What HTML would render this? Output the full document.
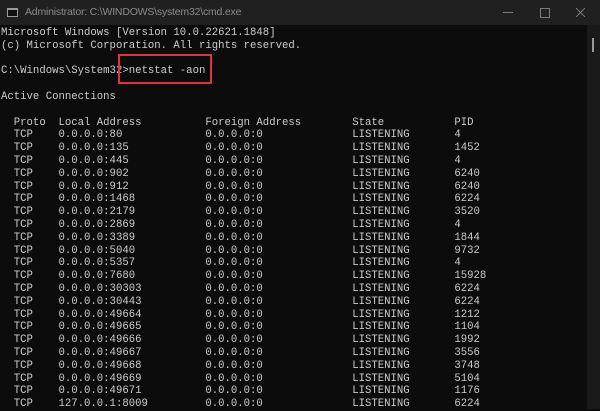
<!DOCTYPE html>
<html><head><meta charset="utf-8"><style>
html,body{margin:0;padding:0;background:#0c0c0c;}
body{width:600px;height:409px;overflow:hidden;position:relative;font-family:"Liberation Mono",monospace;}
#title{position:absolute;left:0;top:0;width:600px;height:25px;background:#202020;}
#title .t{position:absolute;left:25px;top:6px;font-family:"Liberation Sans",sans-serif;font-size:10.5px;color:#8a8a8a;letter-spacing:-0.2px;}
#icon{position:absolute;left:7px;top:8px;width:11px;height:9px;border:1px solid #9a9a9a;background:#111;box-sizing:border-box;}
#icon:before{content:"";position:absolute;left:0;top:0;width:9px;height:1px;background:#9a9a9a;}
#right{position:absolute;left:587px;top:25px;width:13px;height:384px;background:#1a1a1a;}
#thumb{position:absolute;left:592px;top:38px;width:2px;height:14px;background:#9a9a9a;}
pre{position:absolute;left:1px;top:27px;margin:0;font-family:"Liberation Mono",monospace;font-size:10.65px;line-height:12.8px;color:#cccccc;}
#box{position:absolute;left:118px;top:54px;width:94px;height:30px;border:2px solid #d9363e;box-sizing:border-box;}
.ctl{position:absolute;top:0;height:25px;}
</style></head><body>
<div id="title"><div id="icon"></div><div class="t">Administrator: C:\WINDOWS\system32\cmd.exe</div>
<div class="ctl" style="left:503px;width:10px;"><div style="position:absolute;top:12px;width:10px;height:1px;background:#7a7a7a"></div></div>
<div style="position:absolute;left:540px;top:8px;width:8px;height:8px;border:1px solid #7a7a7a;"></div>
<svg style="position:absolute;left:576px;top:8px" width="9" height="9"><path d="M0 0L9 9M9 0L0 9" stroke="#7a7a7a" stroke-width="1"/></svg>
</div>
<div id="right"></div><div id="thumb"></div>
<pre>Microsoft Windows [Version 10.0.22621.1848]
(c) Microsoft Corporation. All rights reserved.

C:\Windows\System32>netstat -aon

Active Connections

  Proto  Local Address          Foreign Address        State           PID
  TCP    0.0.0.0:80             0.0.0.0:0              LISTENING       4
  TCP    0.0.0.0:135            0.0.0.0:0              LISTENING       1452
  TCP    0.0.0.0:445            0.0.0.0:0              LISTENING       4
  TCP    0.0.0.0:902            0.0.0.0:0              LISTENING       6240
  TCP    0.0.0.0:912            0.0.0.0:0              LISTENING       6240
  TCP    0.0.0.0:1468           0.0.0.0:0              LISTENING       6224
  TCP    0.0.0.0:2179           0.0.0.0:0              LISTENING       3520
  TCP    0.0.0.0:2869           0.0.0.0:0              LISTENING       4
  TCP    0.0.0.0:3389           0.0.0.0:0              LISTENING       1844
  TCP    0.0.0.0:5040           0.0.0.0:0              LISTENING       9732
  TCP    0.0.0.0:5357           0.0.0.0:0              LISTENING       4
  TCP    0.0.0.0:7680           0.0.0.0:0              LISTENING       15928
  TCP    0.0.0.0:30303          0.0.0.0:0              LISTENING       6224
  TCP    0.0.0.0:30443          0.0.0.0:0              LISTENING       6224
  TCP    0.0.0.0:49664          0.0.0.0:0              LISTENING       1212
  TCP    0.0.0.0:49665          0.0.0.0:0              LISTENING       1104
  TCP    0.0.0.0:49666          0.0.0.0:0              LISTENING       1992
  TCP    0.0.0.0:49667          0.0.0.0:0              LISTENING       3556
  TCP    0.0.0.0:49668          0.0.0.0:0              LISTENING       3748
  TCP    0.0.0.0:49669          0.0.0.0:0              LISTENING       5104
  TCP    0.0.0.0:49671          0.0.0.0:0              LISTENING       1176
  TCP    127.0.0.1:8009         0.0.0.0:0              LISTENING       6224</pre>
<div id="box"></div>
</body></html>
